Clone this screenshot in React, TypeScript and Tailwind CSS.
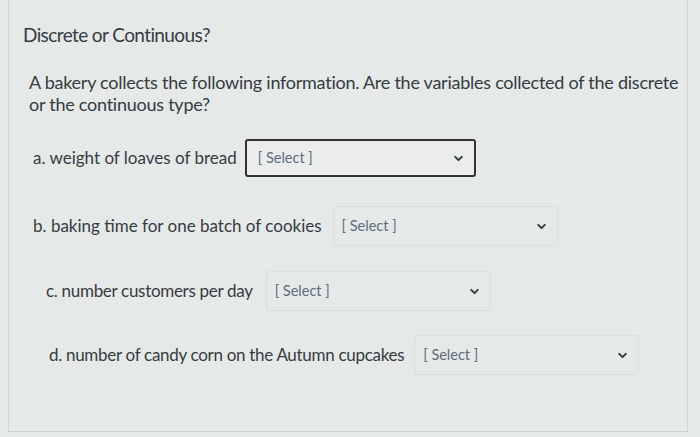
import { ChevronDown } from "lucide-react";

type Item = {
  label: string;
  row: string;
  track: string;
  gap: string;
  boxW: string;
  focused?: boolean;
};

const items: Item[] = [
  { label: "a. weight of loaves of bread", row: "mt-[24px] pl-[24px] h-[38px]", track: "tracking-[0px]", gap: "ml-[8px]", boxW: "w-[231px] h-[38px]", focused: true },
  { label: "b. baking time for one batch of cookies", row: "mt-[29px] pl-[24px] h-[40px]", track: "tracking-[0px]", gap: "ml-[11px]", boxW: "w-[225px] h-[40px]" },
  { label: "c. number customers per day", row: "mt-[25px] pl-[37px] h-[40px]", track: "tracking-[-0.3px]", gap: "ml-[13px]", boxW: "w-[225px] h-[40px]" },
  { label: "d. number of candy corn on the Autumn cupcakes", row: "mt-[24px] pl-[40px] h-[40px]", track: "tracking-[-0.3px]", gap: "ml-[10px]", boxW: "w-[225px] h-[40px]" },
];

function SelectBox({ item }: { item: Item }) {
  return (
    <div
      className={`${item.gap} ${item.boxW} flex items-center justify-between pr-[9px] rounded-[3px] ${
        item.focused
          ? "border-2 border-[#303438] bg-[#eaedeb] pl-[11px]"
          : "border border-[#dbe0dd] pl-[8px]"
      }`}
    >
      <span className="text-[14.5px] text-[#5d6d7e]">[ Select ]</span>
      <ChevronDown className="w-[13px] h-[13px] text-[#2f3b45]" strokeWidth={3.75} />
    </div>
  );
}

export default function App() {
  return (
    <div
      className="w-[700px] h-[437px] overflow-hidden bg-[#e5e9e7] text-[#363c42]"
      style={{ fontFamily: "Lato, 'Noto Sans', sans-serif" }}
    >
      <div className="ml-[8px] mr-[12px] h-[432px] border-l border-r border-b border-[#cfd4d1] pt-[22px]">
        <h1 className="pl-[14px] text-[19px] leading-[26px] tracking-[-0.6px]">Discrete or Continuous?</h1>
        <p className="mt-[23px] pl-[20px] pr-[4px] text-[18px] leading-[22px] tracking-[-0.25px]">
          A bakery collects the following information. Are the variables collected of the discrete or the continuous type?
        </p>

        {items.map((item) => (
          <div key={item.label} className={`${item.row} flex items-center`}>
            <span className={`text-[17px] ${item.track}`}>{item.label}</span>
            <SelectBox item={item} />
          </div>
        ))}
      </div>
    </div>
  );
}
